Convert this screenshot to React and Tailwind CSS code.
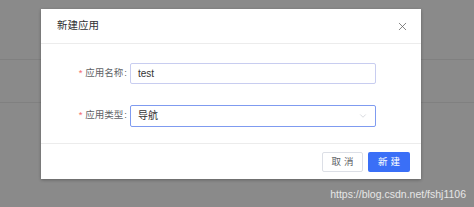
import { X, ChevronDown } from 'lucide-react';

const font = { fontFamily: '"Liberation Sans", "Noto Sans CJK SC", sans-serif' };

function FormRow({ label, children }) {
  return (
    <div className="flex items-center h-[21px]">
      <div className="w-[89px] flex justify-end items-center pr-[3px] text-[9.5px] text-[#606266]">
        <span className="text-[#f56c6c] mr-[3px]">*</span>
        <span>{label}</span>
        <span className="ml-[1px]">:</span>
      </div>
      {children}
    </div>
  );
}

export default function App() {
  return (
    <div className="relative w-[474px] h-[207px] overflow-hidden bg-[#8a8a8a]" style={font}>
      <div className="h-[60px] border-b border-[#808080]" />
      <div className="h-[43px] border-b border-[#808080]" />

      <div className="absolute left-[41px] top-[9px] w-[380px] h-[170px] bg-white shadow-[0_1px_3px_rgba(0,0,0,0.3)] flex flex-col">
        <div className="h-[35px] border-b border-[#ececec] flex items-center justify-between pl-[16px] pr-[12px]">
          <span className="text-[10.5px] text-[#303133]">新建应用</span>
          <X size={13} strokeWidth={1.4} className="text-[#606060]" />
        </div>

        <div className="h-[100px] border-b border-[#ececec] pt-[19px] flex flex-col gap-[21px]">
          <FormRow label="应用名称">
            <div className="w-[246px] h-[21px] border border-[#c8cdf0] rounded-[2px] flex items-center pl-[7px] text-[10px] text-[#333]">
              test
            </div>
          </FormRow>
          <FormRow label="应用类型">
            <div className="w-[246px] h-[22px] border border-[#7f9bf0] rounded-[2px] flex items-center justify-between pl-[7px] pr-[7px] text-[10px] text-[#333]">
              <span>导航</span>
              <ChevronDown size={10} strokeWidth={1.5} className="text-[#c0c4cc]" />
            </div>
          </FormRow>
        </div>

        <div className="flex-1 flex justify-end items-start pt-[8px] pr-[11px] gap-[5px]">
          <button className="w-[41px] h-[20px] border border-[#dcdfe6] rounded-[2px] bg-white text-[9.5px] text-[#606266] tracking-[3px] pl-[3px]">
            取消
          </button>
          <button className="w-[42px] h-[20px] rounded-[2px] bg-[#3a6ff7] text-[9.5px] text-white tracking-[3px] pl-[3px]">
            新建
          </button>
        </div>
      </div>

      <div className="absolute right-[8px] top-[187px] text-[10.5px] text-[#e6e6e6]">
        https://blog.csdn.net/fshj1106
      </div>
    </div>
  );
}
